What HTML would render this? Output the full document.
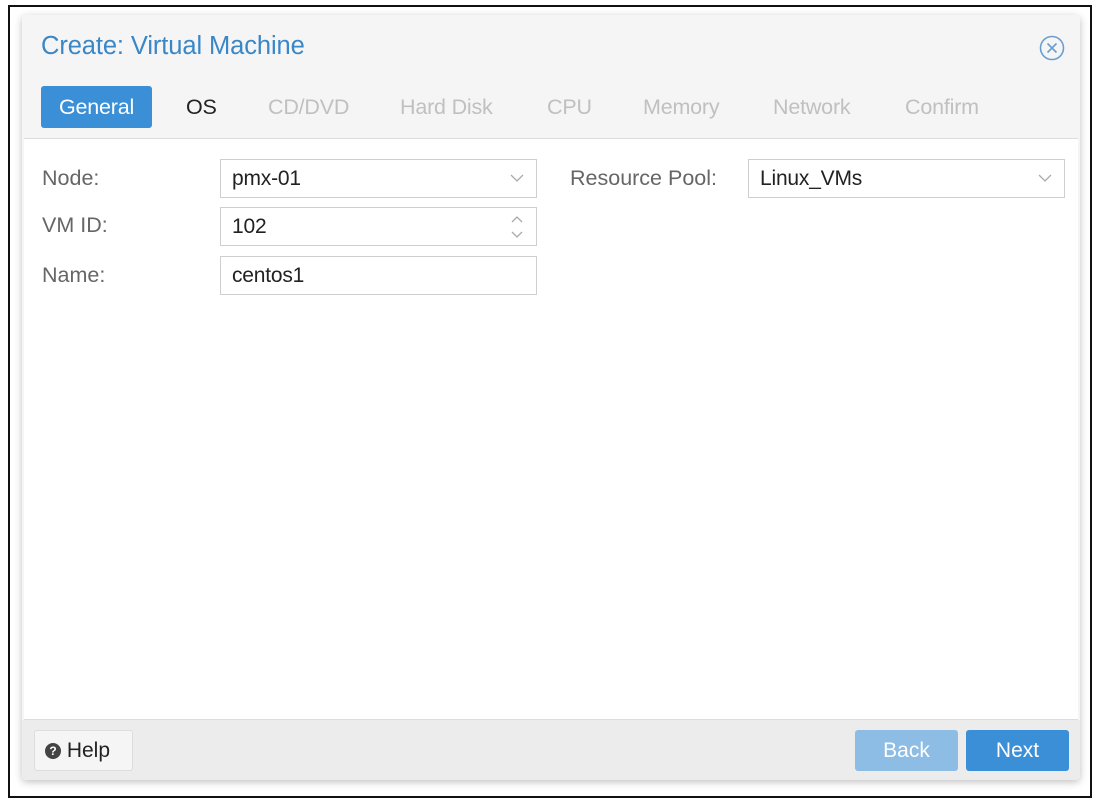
<!DOCTYPE html>
<html><head><style>
*{box-sizing:border-box;margin:0;padding:0}
body{width:1098px;height:803px;background:#fff;font-family:"Liberation Sans",Arial,sans-serif;position:relative;overflow:hidden}
.frame{position:absolute;left:8px;top:5px;width:1084px;height:793px;border:2px solid #111;}
.dlg{position:absolute;left:22px;top:15px;width:1058px;height:765px;background:#f5f5f5;border-radius:4px;box-shadow:0 2px 8px rgba(0,0,0,.25)}
.title{position:absolute;left:19px;top:17px;font-size:25.5px;color:#3a87c8;letter-spacing:-0.1px}
.close{position:absolute;left:1016px;top:19px}
.tab{position:absolute;top:71px;height:42px;line-height:42px;font-size:21.5px;color:#c0c0c0;letter-spacing:-0.2px}
.body{position:absolute;left:2px;top:123px;width:1054px;height:582px;background:#fff;border-top:1px solid #ddd;border-bottom:1px solid #ddd}
.lbl{position:absolute;font-size:21.5px;color:#666;letter-spacing:0}
.fld{position:absolute;height:39px;border:1px solid #cfcfcf;background:#fff;font-size:21px;color:#222;padding-left:11px;line-height:37px;letter-spacing:-0.2px}
.foot{position:absolute;left:0;top:705px;width:1058px;height:60px;background:#ececec;border-radius:0 0 4px 4px}
.btn{position:absolute;height:41px;line-height:41px;font-size:21px;color:#fff;text-align:center;border-radius:3px}
</style></head><body>
<div class="frame"></div>
<div class="dlg">
 <div class="title">Create: Virtual Machine</div>
 <svg class="close" width="28" height="28" viewBox="0 0 28 28"><circle cx="14" cy="14" r="11.5" fill="none" stroke="#6a9ed0" stroke-width="1.6"/><path d="M9.5 9.5L18.5 18.5M18.5 9.5L9.5 18.5" stroke="#6a9ed0" stroke-width="1.6"/></svg>
 <div class="tab" style="left:19px;width:111px;background:#3a8fd6;color:#fff;border-radius:3px;text-align:center">General</div>
 <div class="tab" style="left:164px;color:#222">OS</div>
 <div class="tab" style="left:246px">CD/DVD</div>
 <div class="tab" style="left:378px">Hard Disk</div>
 <div class="tab" style="left:525px">CPU</div>
 <div class="tab" style="left:621px">Memory</div>
 <div class="tab" style="left:751px">Network</div>
 <div class="tab" style="left:883px">Confirm</div>
 <div class="body">
  <div class="lbl" style="left:18px;top:27px">Node:</div>
  <div class="lbl" style="left:18px;top:74px">VM ID:</div>
  <div class="lbl" style="left:18px;top:124px">Name:</div>
  <div class="fld" style="left:196px;top:20px;width:317px">pmx-01<svg style="position:absolute;right:12px;top:14px" width="14" height="9"><path d="M1 1L7 7L13 1" fill="none" stroke="#aaa" stroke-width="1.3"/></svg></div>
  <div class="fld" style="left:196px;top:68px;width:317px">102<svg style="position:absolute;right:12px;top:6px" width="14" height="26"><path d="M2 8L7 3L12 8M2 18L7 23L12 18" fill="none" stroke="#aaa" stroke-width="1.3"/></svg></div>
  <div class="fld" style="left:196px;top:117px;width:317px">centos1</div>
  <div class="lbl" style="left:546px;top:27px">Resource Pool:</div>
  <div class="fld" style="left:724px;top:20px;width:317px">Linux_VMs<svg style="position:absolute;right:12px;top:14px" width="14" height="9"><path d="M1 1L7 7L13 1" fill="none" stroke="#aaa" stroke-width="1.3"/></svg></div>
 </div>
 <div class="foot">
  <div class="btn" style="left:12px;top:10px;width:99px;background:#f5f5f5;border:1px solid #ddd;color:#222;text-align:left;padding-left:10px;line-height:39px"><span style="display:inline-block;width:16px;height:16px;border-radius:50%;background:#444;color:#fff;font-size:12px;font-weight:bold;line-height:16px;text-align:center;vertical-align:2px">?</span> Help</div>
  <div class="btn" style="left:833px;top:10px;width:103px;background:#8dbde5">Back</div>
  <div class="btn" style="left:944px;top:10px;width:103px;background:#3a8fd6">Next</div>
 </div>
</div>
</body></html>
